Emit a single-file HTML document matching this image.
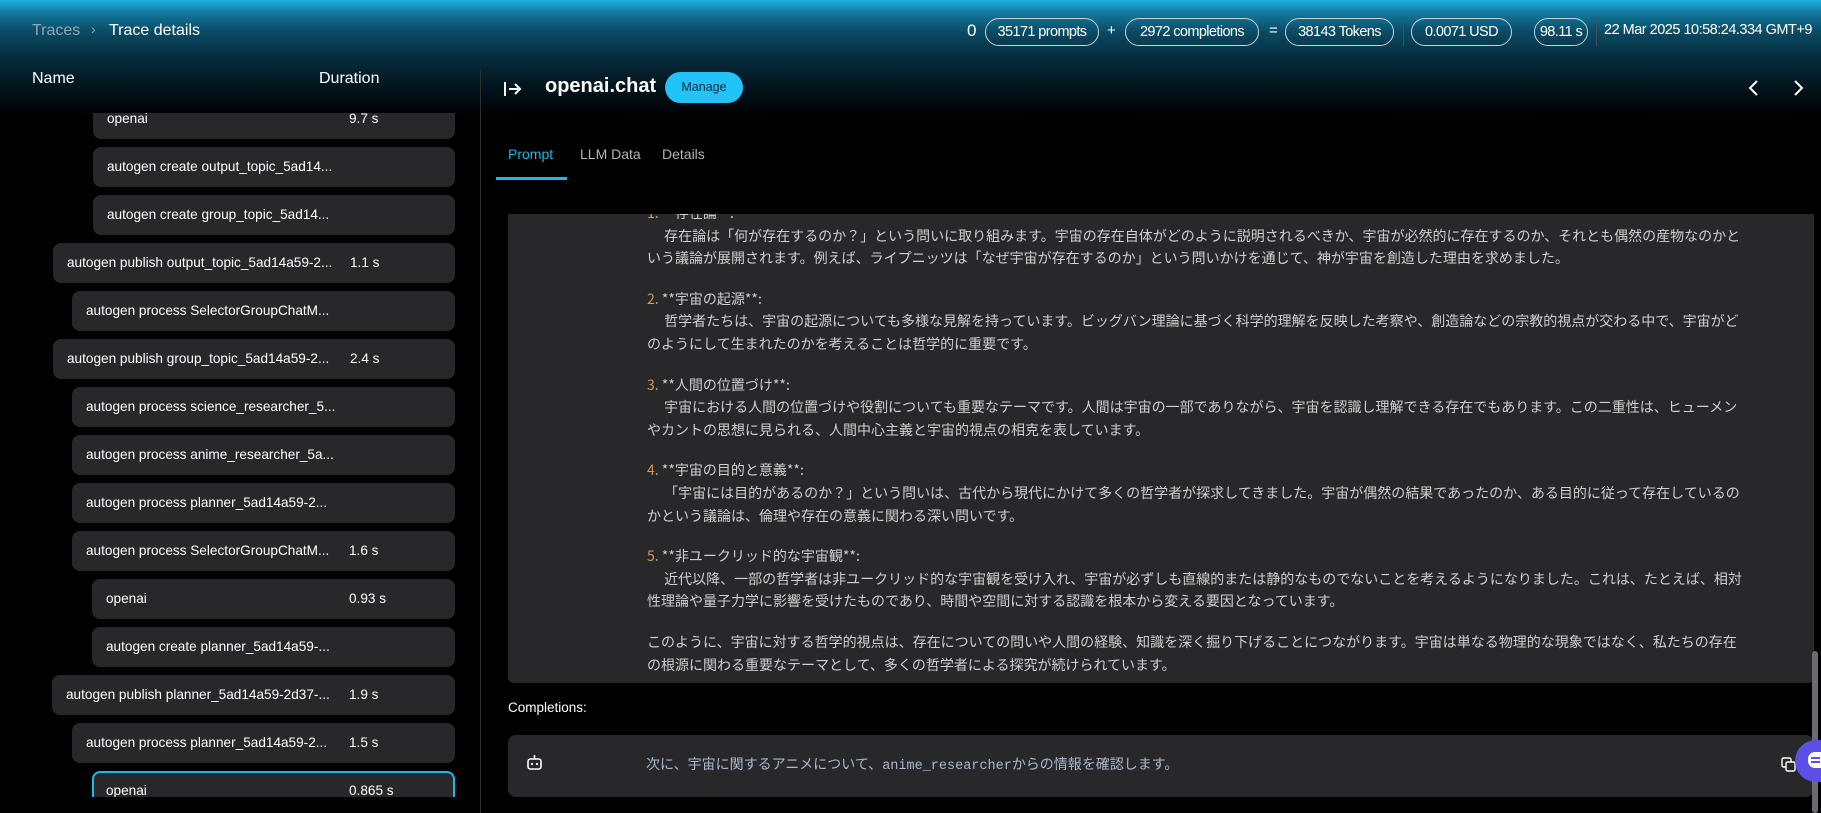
<!DOCTYPE html>
<html><head><meta charset="utf-8">
<style>
*{margin:0;padding:0;box-sizing:border-box}
html,body{width:1821px;height:813px;overflow:hidden;background:#000;font-family:"Liberation Sans","Noto Sans CJK JP",sans-serif;color:#fff}
.hdr{position:absolute;left:0;top:0;width:1821px;height:120px;background:linear-gradient(to bottom,#20b2e6 0px,#127aa0 12px,#0b4a63 32px,#062a3a 60px,#02121a 90px,#000 118px)}
.abs{position:absolute;white-space:nowrap}
.pill{position:absolute;top:18px;height:28px;border:1px solid #c8d2d8;border-radius:14px;font-size:14.5px;line-height:26px;text-align:center;color:#fff;letter-spacing:-0.6px;white-space:nowrap}
.vd{position:absolute;top:18px;width:1px;height:28px;background:#3a5560}
.row{position:absolute;height:40px;background:#28282b;border-radius:8px;font-size:13.6px;line-height:40px}
.row .n{position:absolute;left:14px;white-space:nowrap;color:#fff}
.row .d{position:absolute;left:0;white-space:nowrap;color:#fff}
.box{position:absolute;left:508px;top:214px;width:1306px;height:469px;background:#28282a;overflow:hidden;border-radius:0 0 6px 6px}
.txt{position:absolute;left:139px;top:-12px;font-family:"Noto Sans CJK JP","Liberation Sans",sans-serif;font-size:14px;line-height:22.6px;color:#cfcfcf;white-space:nowrap}
.blk{margin-bottom:18px}
.num{color:#d7955a}
</style></head><body>
<div class="hdr"></div>
<div class="abs" style="left:32px;top:22px;font-size:16px;color:#8fa7b2">Traces</div>
<div class="abs" style="left:91px;top:21px;font-size:14px;color:#8fa7b2">›</div>
<div class="abs" style="left:109px;top:22px;font-size:16px;color:#fff">Trace details</div>

<div class="abs" style="left:967px;top:21px;font-size:17px">0</div>
<div class="pill" style="left:985px;width:114px">35171 prompts</div>
<div class="abs" style="left:1107px;top:22px;font-size:15px">+</div>
<div class="pill" style="left:1125px;width:134px">2972 completions</div>
<div class="abs" style="left:1269px;top:22px;font-size:15px">=</div>
<div class="pill" style="left:1285px;width:109px">38143 Tokens</div>
<div class="vd" style="left:1403px"></div>
<div class="pill" style="left:1411px;width:101px">0.0071 USD</div>
<div class="pill" style="left:1534px;width:54px">98.11 s</div>
<div class="vd" style="left:1596px"></div>
<div class="abs" style="left:1604px;top:22px;font-size:14.5px;letter-spacing:-0.5px">22 Mar 2025 10:58:24.334 GMT+9</div>

<div class="abs" style="left:32px;top:70px;font-size:16px">Name</div>
<div class="abs" style="left:319px;top:70px;font-size:16px">Duration</div>
<div style="position:absolute;left:480px;top:70px;width:1px;height:743px;background:#2e2e30"></div>

<div style="position:absolute;left:0;top:113px;width:480px;height:684px;overflow:hidden">
<div style="position:absolute;left:0;top:-113px;width:480px;height:797px">
<div class="row" style="left:93px;top:99px;right:25px"><span class="n">openai</span><span class="d" style="left:256px">9.7 s</span></div>
<div class="row" style="left:93px;top:147px;right:25px"><span class="n">autogen create output_topic_5ad14...</span></div>
<div class="row" style="left:93px;top:195px;right:25px"><span class="n">autogen create group_topic_5ad14...</span></div>
<div class="row" style="left:53px;top:243px;right:25px"><span class="n">autogen publish output_topic_5ad14a59-2...</span><span class="d" style="left:297px">1.1 s</span></div>
<div class="row" style="left:72px;top:291px;right:25px"><span class="n">autogen process SelectorGroupChatM...</span></div>
<div class="row" style="left:53px;top:339px;right:25px"><span class="n">autogen publish group_topic_5ad14a59-2...</span><span class="d" style="left:297px">2.4 s</span></div>
<div class="row" style="left:72px;top:387px;right:25px"><span class="n">autogen process science_researcher_5...</span></div>
<div class="row" style="left:72px;top:435px;right:25px"><span class="n">autogen process anime_researcher_5a...</span></div>
<div class="row" style="left:72px;top:483px;right:25px"><span class="n">autogen process planner_5ad14a59-2...</span></div>
<div class="row" style="left:72px;top:531px;right:25px"><span class="n">autogen process SelectorGroupChatM...</span><span class="d" style="left:277px">1.6 s</span></div>
<div class="row" style="left:92px;top:579px;right:25px"><span class="n">openai</span><span class="d" style="left:257px">0.93 s</span></div>
<div class="row" style="left:92px;top:627px;right:25px"><span class="n">autogen create planner_5ad14a59-...</span></div>
<div class="row" style="left:52px;top:675px;right:25px"><span class="n">autogen publish planner_5ad14a59-2d37-...</span><span class="d" style="left:297px">1.9 s</span></div>
<div class="row" style="left:72px;top:723px;right:25px"><span class="n">autogen process planner_5ad14a59-2...</span><span class="d" style="left:277px">1.5 s</span></div>
<div class="row" style="left:92px;top:771px;right:25px;border:2px solid #1ab8ec;line-height:36px;height:40px"><span class="n" style="left:12px">openai</span><span class="d" style="left:255px">0.865 s</span></div>
</div></div>

<svg style="position:absolute;left:503px;top:80px" width="20" height="18" viewBox="0 0 20 18"><path d="M2 2V16M6 9H17M12 4L17 9L12 14" stroke="#fff" stroke-width="2" fill="none"/></svg>
<div class="abs" style="left:545px;top:75px;font-size:20px;font-weight:bold">openai.chat</div>
<div class="abs" style="left:665px;top:72px;width:78px;height:31px;background:#22c3f9;border-radius:16px;font-size:12.5px;line-height:31px;text-align:center;color:#0d2b3a">Manage</div>
<svg style="position:absolute;left:1747px;top:79px" width="14" height="18" viewBox="0 0 14 18"><path d="M10 2L3 9L10 16" stroke="#fff" stroke-width="2" fill="none"/></svg>
<svg style="position:absolute;left:1791px;top:79px" width="14" height="18" viewBox="0 0 14 18"><path d="M4 2L11 9L4 16" stroke="#fff" stroke-width="2" fill="none"/></svg>

<div class="abs" style="left:508px;top:146px;font-size:14px;color:#1ab8ec">Prompt</div>
<div class="abs" style="left:580px;top:146px;font-size:14px;color:#b4b4b8">LLM Data</div>
<div class="abs" style="left:662px;top:146px;font-size:14px;color:#b4b4b8">Details</div>
<div style="position:absolute;left:496px;top:177px;width:71px;height:3px;background:#1ab8ec"></div>

<div class="box"><div class="txt">
<div class="blk"><div><span class="num">1.</span> **存在論**:</div>
<div>　 存在論は「何が存在するのか？」という問いに取り組みます。宇宙の存在自体がどのように説明されるべきか、宇宙が必然的に存在するのか、それとも偶然の産物なのかと</div>
<div>いう議論が展開されます。例えば、ライプニッツは「なぜ宇宙が存在するのか」という問いかけを通じて、神が宇宙を創造した理由を求めました。</div></div>
<div class="blk"><div><span class="num">2.</span> **宇宙の起源**:</div>
<div>　 哲学者たちは、宇宙の起源についても多様な見解を持っています。ビッグバン理論に基づく科学的理解を反映した考察や、創造論などの宗教的視点が交わる中で、宇宙がど</div>
<div>のようにして生まれたのかを考えることは哲学的に重要です。</div></div>
<div class="blk"><div><span class="num">3.</span> **人間の位置づけ**:</div>
<div>　 宇宙における人間の位置づけや役割についても重要なテーマです。人間は宇宙の一部でありながら、宇宙を認識し理解できる存在でもあります。この二重性は、ヒューメン</div>
<div>やカントの思想に見られる、人間中心主義と宇宙的視点の相克を表しています。</div></div>
<div class="blk"><div><span class="num">4.</span> **宇宙の目的と意義**:</div>
<div>　 「宇宙には目的があるのか？」という問いは、古代から現代にかけて多くの哲学者が探求してきました。宇宙が偶然の結果であったのか、ある目的に従って存在しているの</div>
<div>かという議論は、倫理や存在の意義に関わる深い問いです。</div></div>
<div class="blk"><div><span class="num">5.</span> **非ユークリッド的な宇宙観**:</div>
<div>　 近代以降、一部の哲学者は非ユークリッド的な宇宙観を受け入れ、宇宙が必ずしも直線的または静的なものでないことを考えるようになりました。これは、たとえば、相対</div>
<div>性理論や量子力学に影響を受けたものであり、時間や空間に対する認識を根本から変える要因となっています。</div></div>
<div><div>このように、宇宙に対する哲学的視点は、存在についての問いや人間の経験、知識を深く掘り下げることにつながります。宇宙は単なる物理的な現象ではなく、私たちの存在</div>
<div>の根源に関わる重要なテーマとして、多くの哲学者による探究が続けられています。</div></div>
</div></div>

<div class="abs" style="left:508px;top:700px;font-size:13.5px;color:#fff">Completions:</div>
<div style="position:absolute;left:508px;top:735px;width:1306px;height:62px;background:#28282a;border-radius:8px"></div>
<svg style="position:absolute;left:526px;top:754px" width="17" height="17" viewBox="0 0 17 17"><path d="M8.5 1V5" stroke="#fff" stroke-width="1.6"/><rect x="2" y="5" width="13" height="10" rx="2.5" stroke="#fff" stroke-width="1.6" fill="none"/><circle cx="6" cy="10" r="1.1" fill="#fff"/><circle cx="11" cy="10" r="1.1" fill="#fff"/></svg>
<div class="abs" style="left:646px;top:754px;font-family:'Noto Sans CJK JP',sans-serif;font-size:14px;color:#aab8cc">次に、宇宙に関するアニメについて、<span style="font-family:'Liberation Mono',monospace;font-size:13.5px">anime_researcher</span>からの情報を確認します。</div>
<svg style="position:absolute;left:1781px;top:757px" width="16" height="16" viewBox="0 0 16 16"><rect x="1" y="1" width="9" height="9" rx="1.5" stroke="#fff" stroke-width="1.4" fill="none"/><rect x="5" y="5" width="9" height="9" rx="1.5" stroke="#fff" stroke-width="1.4" fill="#28282a"/></svg>
<div style="position:absolute;left:1812px;top:651px;width:6px;height:162px;background:#6a6a70;border-radius:3px"></div>
<div style="position:absolute;left:1795px;top:740px;width:26px;height:42px;background:#5b4fe6;border-radius:21px 0 0 21px"></div>
<div style="position:absolute;left:1808px;top:752px;width:13px;height:16px;background:#fff;border-radius:7px 0 0 7px"></div>
<div style="position:absolute;left:1811px;top:757px;width:9px;height:1.5px;background:#5b4fe6"></div>
<div style="position:absolute;left:1811px;top:761px;width:9px;height:1.5px;background:#5b4fe6"></div>
</body></html>
